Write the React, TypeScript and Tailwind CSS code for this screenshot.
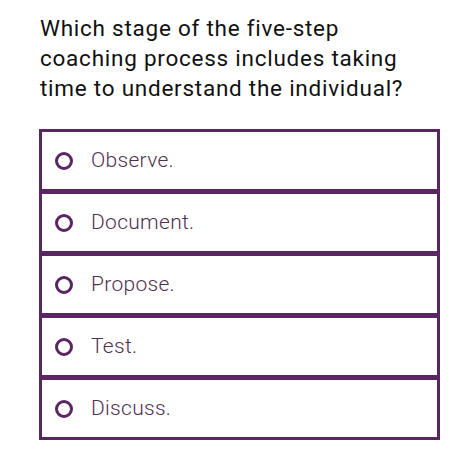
const options = ['Observe.', 'Document.', 'Propose.', 'Test.', 'Discuss.']

function RadioOption({ label, first }: { label: string; first: boolean }) {
  return (
    <label
      className={`flex h-[63px] cursor-pointer items-center border-[3px] border-[#5b2463] bg-white pl-[13px] ${
        first ? '' : '-mt-px'
      }`}
    >
      <span className="h-[18px] w-[18px] shrink-0 rounded-full border-[3px] border-[#5b2463]" />
      <span className="ml-[18px] text-[21px] font-light tracking-[0.3px] text-[#4f2f52]">
        {label}
      </span>
    </label>
  )
}

export default function App() {
  return (
    <div className="min-h-[453px] bg-white px-[39px] pt-[13px] font-['Roboto',sans-serif]">
      <h1 className="w-[370px] pl-px text-[22.5px] leading-[30px] font-normal tracking-[0.75px] text-[#111]">
        Which stage of the five-step coaching process includes taking time to
        understand the individual?
      </h1>

      <div className="mt-[26px] flex w-[401px] flex-col">
        {options.map((o, i) => (
          <RadioOption key={o} label={o} first={i === 0} />
        ))}
      </div>
    </div>
  )
}
